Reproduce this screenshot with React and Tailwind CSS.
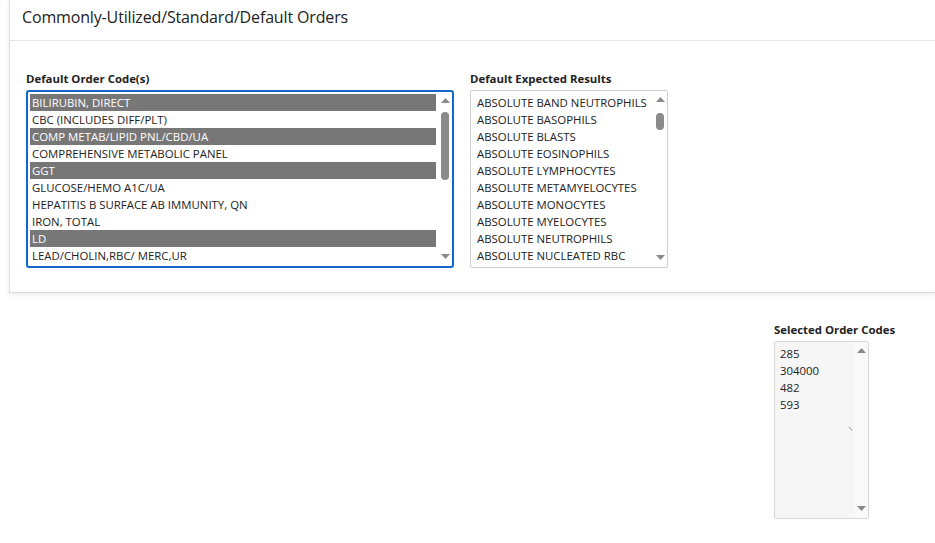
const orderCodes = [
  { label: "BILIRUBIN, DIRECT", selected: true },
  { label: "CBC (INCLUDES DIFF/PLT)" },
  { label: "COMP METAB/LIPID PNL/CBD/UA", selected: true },
  { label: "COMPREHENSIVE METABOLIC PANEL" },
  { label: "GGT", selected: true },
  { label: "GLUCOSE/HEMO A1C/UA" },
  { label: "HEPATITIS B SURFACE AB IMMUNITY, QN" },
  { label: "IRON, TOTAL" },
  { label: "LD", selected: true },
  { label: "LEAD/CHOLIN,RBC/ MERC,UR" },
];

const expectedResults = [
  "ABSOLUTE BAND NEUTROPHILS",
  "ABSOLUTE BASOPHILS",
  "ABSOLUTE BLASTS",
  "ABSOLUTE EOSINOPHILS",
  "ABSOLUTE LYMPHOCYTES",
  "ABSOLUTE METAMYELOCYTES",
  "ABSOLUTE MONOCYTES",
  "ABSOLUTE MYELOCYTES",
  "ABSOLUTE NEUTROPHILS",
  "ABSOLUTE NUCLEATED RBC",
];

const selectedCodes = ["285", "304000", "482", "593"];

// 스크롤바 화살표
const ArrowUp = () => (
  <svg width="9" height="5" viewBox="0 0 9 5">
    <polygon points="0,5 9,5 4.5,0" fill="#8a8a8a" />
  </svg>
);
const ArrowDown = () => (
  <svg width="9" height="5" viewBox="0 0 9 5">
    <polygon points="0,0 9,0 4.5,5" fill="#8a8a8a" />
  </svg>
);

function Scrollbar({ thumbTop, thumbHeight, track = "" }) {
  return (
    <div className={`relative w-[14px] h-full flex flex-col items-center ${track}`}>
      <div className="pt-[6px]">
        <ArrowUp />
      </div>
      {thumbHeight ? (
        <div
          className="absolute left-[3px] w-[8px] rounded-full bg-[#8a8a8a]"
          style={{ top: thumbTop, height: thumbHeight }}
        />
      ) : null}
      <div className="mt-auto pb-[7px]">
        <ArrowDown />
      </div>
    </div>
  );
}

export default function App() {
  return (
    <div
      className="min-h-screen bg-white text-[#222]"
      style={{ fontFamily: '"Open Sans", "Noto Sans", Arial, sans-serif' }}
    >
      {/* 카드 */}
      <div className="ml-[9px] border-l border-b border-[#dcdcdc] shadow-[0_2px_4px_rgba(0,0,0,0.08)]">
        <div className="h-[41px] pl-[12px] pt-[6px] border-b border-[#e6e6e6]">
          <h2 className="text-[16px] leading-[22px] text-[#222] tracking-[-0.15px]">
            Commonly-Utilized/Standard/Default Orders
          </h2>
        </div>
        <div className="pl-[16px] pt-[30px] pb-[24px] flex gap-[16px]">
          {/* Default Order Code(s) */}
          <div className="flex flex-col">
            <label className="text-[11.4px] font-bold leading-[16px] mb-[3px]">
              Default Order Code(s)
            </label>
            <div className="w-[428px] h-[178px] border-2 border-[#1467c8] rounded-[3px] flex overflow-hidden bg-white">
              <div className="flex-1 p-[2px] pr-0">
                {orderCodes.map((o) => (
                  <div
                    key={o.label}
                    className={`h-[17px] pl-[2px] text-[11.4px] leading-[17px] whitespace-nowrap ${
                      o.selected ? "bg-[#777777] text-white" : "text-[#222]"
                    }`}
                  >
                    {o.label}
                  </div>
                ))}
              </div>
              <div className="pl-[2px]">
                <Scrollbar thumbTop={20} thumbHeight={68} />
              </div>
            </div>
          </div>

          {/* Default Expected Results */}
          <div className="flex flex-col">
            <label className="text-[11.4px] font-bold leading-[16px] mb-[3px]">
              Default Expected Results
            </label>
            <div className="w-[198px] h-[178px] border border-[#cfcfcf] rounded-[2px] flex overflow-hidden bg-white">
              <div className="flex-1 pt-[3px] pl-[6px]">
                {expectedResults.map((r) => (
                  <div
                    key={r}
                    className="h-[17px] text-[11.4px] leading-[17px] whitespace-nowrap text-[#222]"
                  >
                    {r}
                  </div>
                ))}
              </div>
              <Scrollbar thumbTop={22} thumbHeight={17} />
            </div>
          </div>
        </div>
      </div>

      {/* Selected Order Codes */}
      <div className="pl-[774px] pt-[29px]">
        <label className="block text-[11.4px] font-bold leading-[16px] mb-[3px]">
          Selected Order Codes
        </label>
        <div className="w-[95px] h-[178px] border border-[#d6d6d6] rounded-[2px] flex overflow-hidden bg-[#f6f6f6]">
          <div className="flex-1 relative pt-[3px] pl-[5px]">
            {selectedCodes.map((c) => (
              <div key={c} className="h-[17px] text-[11.4px] leading-[17px] text-[#222]">
                {c}
              </div>
            ))}
            <div className="absolute left-[73px] top-[86px] w-[5px] h-px bg-[#999] rotate-45" />
          </div>
          <Scrollbar track="bg-[#f9f9f9]" />
        </div>
      </div>
    </div>
  );
}
